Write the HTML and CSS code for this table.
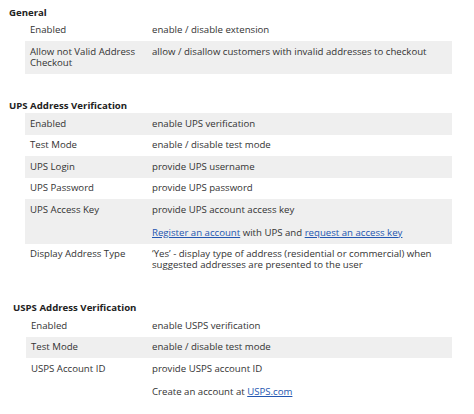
FILE: index.html
```html
<!DOCTYPE html>
<html>
<head>
<meta charset="utf-8">
<link rel="stylesheet" href="styles.css">
</head>
<body>
<div class="page">
  <section class="section">
    <h2 class="heading">General</h2>
    <div class="table">
      <div class="row"><div class="label">Enabled</div><div class="desc"><p>enable / disable extension</p></div></div>
      <div class="row alt"><div class="label">Allow not Valid Address Checkout</div><div class="desc"><p>allow / disallow customers with invalid addresses to checkout</p></div></div>
    </div>
  </section>
  <section class="section">
    <h2 class="heading">UPS Address Verification</h2>
    <div class="table">
      <div class="row alt"><div class="label">Enabled</div><div class="desc"><p>enable UPS verification</p></div></div>
      <div class="row"><div class="label">Test Mode</div><div class="desc"><p>enable / disable test mode</p></div></div>
      <div class="row alt"><div class="label">UPS Login</div><div class="desc"><p>provide UPS username</p></div></div>
      <div class="row"><div class="label">UPS Password</div><div class="desc"><p>provide UPS password</p></div></div>
      <div class="row alt"><div class="label">UPS Access Key</div><div class="desc"><p>provide UPS account access key</p><p><a href="#">Register an account</a> with UPS and <a href="#">request an access key</a></p></div></div>
      <div class="row"><div class="label">Display Address Type</div><div class="desc"><p>‘Yes’ - display type of address (residential or commercial) when suggested addresses are presented to the user</p></div></div>
    </div>
  </section>
  <section class="section usps">
    <h2 class="heading">USPS Address Verification</h2>
    <div class="table">
      <div class="row"><div class="label">Enabled</div><div class="desc"><p>enable USPS verification</p></div></div>
      <div class="row alt"><div class="label">Test Mode</div><div class="desc"><p>enable / disable test mode</p></div></div>
      <div class="row"><div class="label">USPS Account ID</div><div class="desc"><p>provide USPS account ID</p><p>Create an account at <a href="#">USPS.com</a></p></div></div>
    </div>
  </section>
</div>
</body>
</html>
```
FILE: styles.css
```css
html, body {
  margin: 0;
  padding: 0;
  background: #ffffff;
}
body {
  font-family: "Open Sans", "Liberation Sans", sans-serif;
  font-size: 9.65px;
  line-height: 10.7px;
  color: #333333;
}
.page {
  padding: 7px 22px 0 8px;
  display: flex;
  flex-direction: column;
  gap: 26.5px;
}
.heading {
  margin: 0 0 1px 1px;
  font-size: 9.65px;
  line-height: 12px;
  font-weight: 700;
  color: #222222;
}
.usps .heading {
  margin-left: 5px;
}
.table {
  margin-left: 17px;
  display: flex;
  flex-direction: column;
}
.usps .table {
  margin-left: 18px;
}
.row {
  display: grid;
  grid-template-columns: 127px 1fr;
  padding: 5.4px 0;
}
.usps .row {
  grid-template-columns: 126px 1fr;
}
.row.alt {
  background: #efefef;
}
.label {
  padding-left: 5px;
  padding-right: 6px;
}
.desc p {
  margin: 0;
}
.desc p + p {
  margin-top: 12.3px;
}
.desc a {
  color: #2356b0;
  text-decoration: underline;
}
```
